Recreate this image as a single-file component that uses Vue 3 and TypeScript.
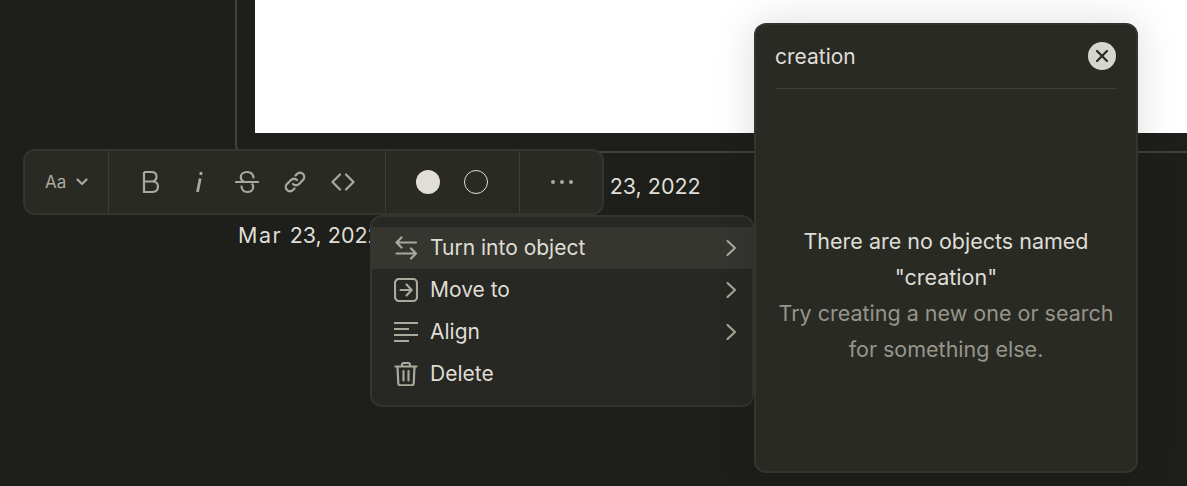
<script setup lang="ts">
const menu = [
  { label: 'Turn into object', icon: 'turn', arrow: true, active: true },
  { label: 'Move to', icon: 'move', arrow: true, active: false },
  { label: 'Align', icon: 'align', arrow: true, active: false },
  { label: 'Delete', icon: 'trash', arrow: false, active: false },
]
</script>

<template>
  <div class="page">
    <div class="frame"><div class="picture"></div></div>
    <div class="dates">
      <div class="date-top"><span class="mon">Mar</span> 23, 2022</div>
      <div class="date-bottom"><span class="mon">Mar</span> 23, 2022</div>
    </div>

    <div class="toolbar">
      <div class="tb-sec tb-type">
        <span class="aa">Aa</span>
        <svg width="12" height="12" viewBox="0 0 12 12" fill="none" stroke="#aaa99b" stroke-width="2.2" stroke-linecap="round" stroke-linejoin="round"><path d="M1.500 3.500 6 8l4.500-4.500" /></svg>
      </div>
      <div class="tb-sec tb-format">
        <svg class="ic" width="24" height="24" viewBox="0 0 24 24" fill="none" stroke="#aaa99b" stroke-width="2.200"><path d="M5 2v20h8.500c3.500 0 5.500-2.200 5.500-5.400 0-3-2.200-5.100-5.500-5.100H5M5 11.500h7.500c3 0 5-1.800 5-4.700C17.500 3.800 15.500 2 12.500 2H5" /></svg>
        <svg class="ic" width="24" height="24" viewBox="0 0 24 24" fill="none" stroke="#aaa99b" stroke-width="2.800"><path d="M13.200 8.500 10.500 22" /><path d="M14.200 2 13.700 5" /></svg>
        <svg class="ic" width="24" height="24" viewBox="0 0 24 24" fill="none" stroke="#aaa99b" stroke-width="2.200" stroke-linecap="round"><path d="M1 12h22" /><path d="M18.500 7.500C18 4.300 15.500 2 12 2 8.300 2 5.800 4.300 5.800 7.300c0 2 1.100 3.500 3 4.400M6.500 16.500c.4 3.500 2.600 5.500 5.700 5.500 3.500 0 6-2.200 6-5 0-1-.3-1.900-.8-2.700" /></svg>
        <svg class="ic" width="24" height="24" viewBox="0 0 24 24" fill="none" stroke="#aaa99b" stroke-width="2.300" stroke-linecap="round"><path d="M10 14a4.200 4.200 0 0 0 6 0l4-4a4.200 4.200 0 0 0-6-6l-1.500 1.500" /><path d="M14 10a4.200 4.200 0 0 0-6 0l-4 4a4.200 4.200 0 0 0 6 6l1.500-1.500" /></svg>
        <svg class="ic" width="24" height="24" viewBox="0 0 24 24" fill="none" stroke="#aaa99b" stroke-width="2.200" stroke-linecap="round" stroke-linejoin="round"><path d="M9 4.500 1.500 12 9 19.500" /><path d="M15 4.500l7.500 7.500-7.500 7.500" /></svg>
      </div>
      <div class="tb-sec tb-color">
        <span class="dot filled"></span>
        <span class="dot ring"></span>
      </div>
      <div class="tb-sec tb-more">
        <span class="pip"></span><span class="pip"></span><span class="pip"></span>
      </div>
    </div>

    <div class="menu">
      <div v-for="item in menu" :key="item.label" class="row" :class="{ active: item.active }">
        <svg class="row-ic" width="24" height="24" viewBox="0 0 24 24" fill="none" stroke="#aaa99b" stroke-width="2.200" stroke-linecap="round" stroke-linejoin="round">
          <template v-if="item.icon === 'turn'">
            <path d="M22 6.500H2.500M7.500 1.500 2.500 6.500l5 5" /><path d="M2.500 17.500H22M17 12.500l5 5-5 5" />
          </template>
          <template v-else-if="item.icon === 'move'">
            <rect x="1" y="1" width="22" height="22" rx="4" /><path d="M6.500 12h11M12.500 6.500l5.200 5.500-5.200 5.500" />
          </template>
          <template v-else-if="item.icon === 'align'">
            <g stroke-linecap="butt"><path d="M0 3h24M0 9h15M0 15h24M0 21h15" /></g>
          </template>
          <template v-else>
            <path d="M1.500 4.500h21M8 4.500V2.800A1.800 1.800 0 0 1 9.800 1h4.400A1.800 1.800 0 0 1 16 2.800v1.700M3.500 4.500l.8 17a2 2 0 0 0 2 1.800h11.400a2 2 0 0 0 2-1.800l.8-17M9.500 9v9.500M14.500 9v9.500" />
          </template>
        </svg>
        <span class="row-label">{{ item.label }}</span>
        <svg v-if="item.arrow" class="row-arrow" width="12" height="20" viewBox="0 0 12 20" fill="none" stroke="#aaa99b" stroke-width="2" stroke-linecap="round" stroke-linejoin="round"><path d="M2.500 3 10 10l-7.500 7" /></svg>
      </div>
    </div>

    <div class="panel">
      <div class="search">
        <span class="query">creation</span>
        <span class="clear">
          <svg width="14" height="14" viewBox="0 0 14 14" fill="none" stroke="#2a2a25" stroke-width="2.200" stroke-linecap="round"><path d="M2 2l10 10M12 2 2 12" /></svg>
        </span>
      </div>
      <div class="empty">
        <div class="empty-title">There are no objects named<br />"creation"</div>
        <div class="empty-sub">Try creating a new one or search<br />for something else.</div>
      </div>
    </div>
  </div>
</template>

<style>
html, body { margin: 0; background: #1e1e1a; }
</style>

<style scoped>
.page {
  position: relative;
  width: 1187px;
  height: 486px;
  overflow: hidden;
  background: #1e1e1a;
  font-family: Inter, "Liberation Sans", sans-serif;
  font-size: 21px;
  color: #dfddd5;
}
.frame {
  box-sizing: border-box;
  margin-left: 235px;
  height: 153px;
  padding: 0 0 18px 18px;
  border-left: 2px solid #42423c;
  border-bottom: 2px solid #42423c;
  border-bottom-left-radius: 8px;
}
.picture { height: 133px; background: #fff; }
.dates { position: relative; margin-left: 238px; height: 120px; font-size: 21.5px; }
.date-top { padding: 20px 0 0 320px; height: 26px; line-height: 26px; white-space: nowrap; }
.date-bottom { margin-top: 23px; height: 26px; line-height: 26px; white-space: nowrap; }
.mon { letter-spacing: 1.500px; margin-right: 1.500px; }

.toolbar {
  position: absolute;
  left: 23px;
  top: 149px;
  box-sizing: border-box;
  width: 581px;
  height: 66px;
  display: flex;
  background: #2a2a25;
  border: 2px solid #35352f;
  border-radius: 12px;
}
.tb-sec { display: flex; align-items: center; height: 100%; box-sizing: border-box; }
.tb-sec + .tb-sec { border-left: 1px solid #3d3d37; }
.tb-type { width: 83px; padding-left: 20px; gap: 10px; }
.aa { font-size: 17px; color: #aaa99b; }
.tb-format { width: 277px; padding-left: 30px; gap: 24px; }
.ic { flex: none; }
.tb-color { width: 134px; padding-left: 30px; gap: 24px; padding-bottom: 1px; }
.dot { width: 24px; height: 24px; border-radius: 50%; box-sizing: border-box; }
.filled { background: #e0ded6; }
.ring { border: 1.800px solid #e0ded6; }
.tb-more { flex: 1; justify-content: center; gap: 5px; padding-left: 2px; }
.pip { width: 4px; height: 4px; border-radius: 50%; background: #aaa99b; }

.menu {
  position: absolute;
  left: 370px;
  top: 215px;
  box-sizing: border-box;
  width: 384px;
  height: 192px;
  padding: 10px 0;
  background: #272723;
  border: 2px solid #35352f;
  border-radius: 12px;
}
.row { display: flex; align-items: center; height: 42px; padding: 0 15px 0 22px; }
.row.active { background: #363631; }
.row-ic { flex: none; margin-right: 12px; }
.row-label { flex: 1; color: #dfddd5; line-height: 42px; }
.row-arrow { flex: none; }

.panel {
  position: absolute;
  left: 754px;
  top: 23px;
  box-sizing: border-box;
  width: 384px;
  height: 450px;
  padding: 0 19px;
  background: #2a2a25;
  border: 2px solid #35352f;
  border-radius: 12px;
  box-shadow: 0 0 40px rgba(0, 0, 0, 0.14);
}
.search {
  display: flex;
  align-items: center;
  justify-content: space-between;
  height: 64px;
  margin-top: -1px;
  border-bottom: 1px solid #3f3f39;
}
.query { color: #dfddd5; }
.clear {
  display: flex;
  align-items: center;
  justify-content: center;
  width: 28px;
  height: 28px;
  margin-right: 1px;
  border-radius: 50%;
  background: #d7d6cd;
}
.empty {
  margin-top: 134px;
  text-align: center;
  line-height: 36px;
  font-size: 21.500px;
}
.empty-title { color: #dfddd5; }
.empty-sub { color: #96958a; }
</style>
